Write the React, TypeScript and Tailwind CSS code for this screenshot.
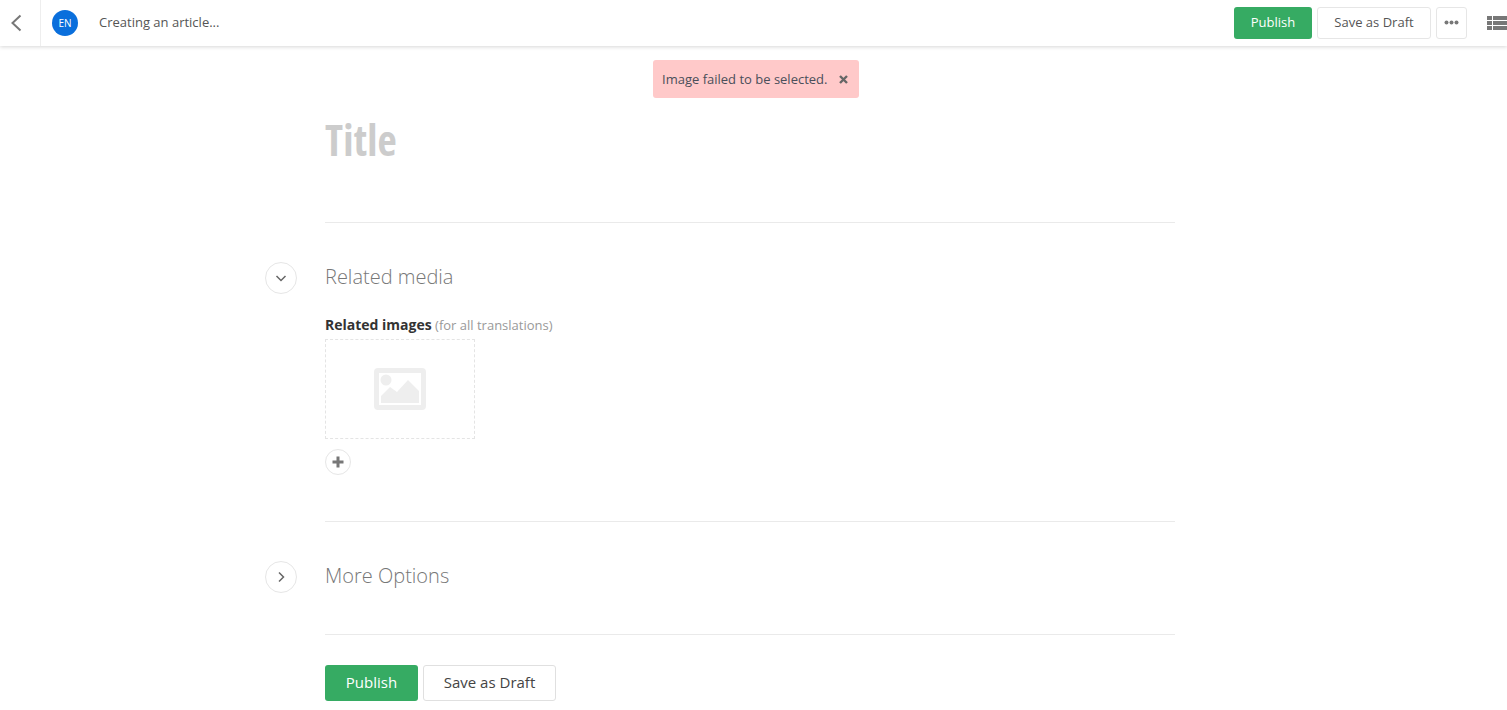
import React from 'react'

const font = { fontFamily: '"Open Sans", "Liberation Sans", sans-serif' }

function ChevronButton({ dir }: { dir: 'down' | 'right' }) {
  return (
    <div className="flex h-8 w-8 shrink-0 items-center justify-center rounded-full border border-[#e6e6e6] bg-white">
      <svg width="14" height="14" viewBox="0 0 14 14" fill="none" stroke="#666" strokeWidth="1.5">
        {dir === 'down' ? <path d="M2.5 5l4.5 4.5L11.500 5" /> : <path d="M5 2.500L9.500 7 5 11.500" />}
      </svg>
    </div>
  )
}

function SectionHead({ title, dir }: { title: string; dir: 'down' | 'right' }) {
  return (
    <div className="-ml-[60px] flex h-8 items-center gap-7">
      <ChevronButton dir={dir} />
      <span className="-mt-[2px] text-[20px] font-light leading-8 text-[#777]">{title}</span>
    </div>
  )
}

export default function App() {
  return (
    <div className="relative h-[710px] overflow-hidden bg-white" style={font}>
      {/* top bar */}
      <header className="flex h-[46px] items-center bg-white shadow-[0_1px_4px_rgba(0,0,0,0.16)]">
        <div className="flex h-full w-[41px] items-center justify-center border-r border-[#eee] pr-[8px]">
          <svg width="12" height="18" viewBox="0 0 12 18" fill="none" stroke="#777" strokeWidth="2">
            <path d="M10.500 1.500L2.500 9l8 7.500" />
          </svg>
        </div>
        <div className="ml-[11px] flex h-[26px] w-[26px] items-center justify-center rounded-full bg-[#0a6fdc] text-[10px] font-medium text-white">
          EN
        </div>
        <span className="ml-[21px] text-[13px] text-[#555]">Creating an article...</span>
        <div className="ml-auto flex items-center gap-[5px]">
          <button className="h-8 w-[78px] rounded-[3px] bg-[#36ab63] text-[13px] font-medium text-white">Publish</button>
          <button className="h-8 w-[114px] rounded-[3px] border border-[#e6e6e6] text-[13px] text-[#555]">Save as Draft</button>
          <button className="flex h-8 w-[31px] items-center justify-center rounded-[3px] border border-[#e6e6e6] pb-[2px]">
            <svg width="15" height="5" viewBox="0 0 15 5" fill="#777">
              <circle cx="2.500" cy="2.500" r="2" />
              <circle cx="7.500" cy="2.500" r="2" />
              <circle cx="12.500" cy="2.500" r="2" />
            </svg>
          </button>
          <svg className="ml-[15px]" width="20" height="16" viewBox="0 0 20 16" fill="#777">
            <rect x="0" y="1" width="5" height="4" />
            <rect x="6" y="1" width="14" height="4" />
            <rect x="0" y="6" width="5" height="4" />
            <rect x="6" y="6" width="14" height="4" />
            <rect x="0" y="11" width="5" height="4" />
            <rect x="6" y="11" width="14" height="4" />
          </svg>
        </div>
      </header>

      {/* toast */}
      <div className="absolute left-[653px] top-[60px] flex h-[38px] w-[206px] items-center rounded-[3px] bg-[#ffc9c9] pl-[9px] pt-[1px] text-[13px] text-[#4a4f5a]">
        <span>Image failed to be selected.</span>
        <svg className="ml-[12px]" width="9" height="9" viewBox="0 0 9 9" stroke="#666" strokeWidth="2.400">
          <path d="M1 1l7 7M8 1l-7 7" />
        </svg>
      </div>

      <main className="ml-[325px] w-[850px]">
        <div className="h-[177px] border-b border-[#eaeaea] pt-[63px]">
          <div className="text-[42px] font-bold leading-[62px] tracking-[0.2px] text-[#ccc] [font-stretch:75%]">Title</div>
        </div>

        <section className="h-[299px] border-b border-[#eaeaea] pt-[39px]">
          <SectionHead title="Related media" dir="down" />
          <div className="mt-[21px] h-[18px] leading-[18px]">
            <span className="text-sm font-bold text-[#333]">Related images</span>
            <span className="text-[13px] text-[#999]"> (for all translations)</span>
          </div>
          <div className="mt-[6px] flex h-[100px] w-[150px] items-center justify-center border border-dashed border-[#e4e4e4]">
            <svg width="52" height="42" viewBox="0 0 52 42" fill="#eee">
              <path fillRule="evenodd" d="M4 0h44a4 4 0 0 1 4 4v34a4 4 0 0 1-4 4H4a4 4 0 0 1-4-4V4a4 4 0 0 1 4-4zm1 5v32h42V5z" />
              <circle cx="12" cy="12" r="5.500" />
              <path d="M7 35v-7l9-9 7 5 11-12 11 11v12z" />
            </svg>
          </div>
          <div className="mt-[10px] flex h-[26px] w-[26px] items-center justify-center rounded-full border border-[#e6e6e6]">
            <svg width="12" height="12" viewBox="0 0 12 12" stroke="#777" strokeWidth="3">
              <path d="M6 0.500v11M0.500 6h11" />
            </svg>
          </div>
        </section>

        <section className="h-[113px] border-b border-[#eaeaea] pt-[39px]">
          <SectionHead title="More Options" dir="right" />
        </section>

        <div className="mt-[30px] flex gap-[5px]">
          <button className="h-9 w-[93px] rounded-[3px] bg-[#36ab63] pb-[2px] text-[15px] font-medium text-white">Publish</button>
          <button className="h-9 w-[133px] rounded-[3px] border border-[#e0e0e0] pb-[2px] text-[15px] text-[#444]">Save as Draft</button>
        </div>
      </main>
    </div>
  )
}
